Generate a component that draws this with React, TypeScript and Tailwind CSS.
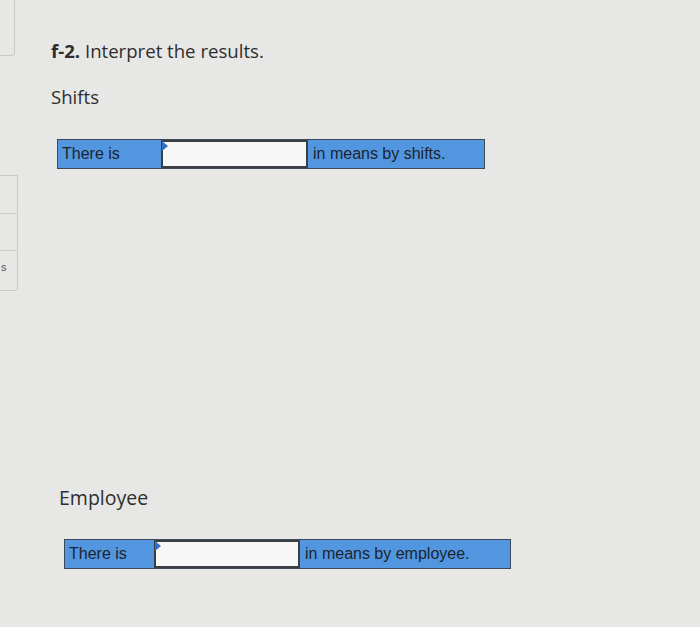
const Blank = ({ width }: { width: string }) => (
  <div className={`relative ${width} h-full bg-[#f7f7f7] border-2 border-[#3b3f45]`}>
    <span className="absolute -left-[1px] -top-[1px] w-0 h-0 border-t-[5px] border-b-[5px] border-l-[6px] border-t-transparent border-b-transparent border-l-[#2f6fc4]" />
  </div>
)

const Row = ({ left, mid, right, tail }: { left: string; mid: string; right: string; tail: string }) => (
  <div className="flex h-[30px] border border-[#3e4a58] bg-[#5196df] text-[#1c2430] text-[16px] leading-none">
    <div className={`${left} flex items-center pl-[4px]`}>There is</div>
    <Blank width={mid} />
    <div className={`${right} flex items-center pl-[5px]`}>{tail}</div>
  </div>
)

const App = () => {
  return (
    <div className="w-[700px] h-[627px] bg-[#e7e7e6] relative overflow-hidden" style={{ fontFamily: "'Liberation Sans', Arial, sans-serif" }}>

      {/* side panel remnants */}
      <div className="absolute left-0 top-0 w-[15px] h-[56px] border-r border-b border-[#c9c9c8] rounded-br-[4px]" />
      <div className="absolute left-0 top-[175px] w-[18px] h-[116px] border border-l-0 border-[#c9c9c8] rounded-br-[4px] flex flex-col">
        <div className="h-[38px] border-b border-[#cfcfce]" />
        <div className="h-[37px] border-b border-[#cfcfce]" />
        <div className="flex-1 text-[11px] text-[#555] pt-[8px] pl-[1px]">s</div>
      </div>

      <div className="pl-[51px] pt-[40px] text-[#2e2e2e]">
        <p className="text-[18.6px] leading-[22px]" style={{ fontFamily: "'Open Sans', 'Liberation Sans', sans-serif" }}>
          <span className="font-bold">f-2.</span> Interpret the results.
        </p>
        <p className="mt-[24px] text-[18.6px] leading-[22px]" style={{ fontFamily: "'Open Sans', 'Liberation Sans', sans-serif" }}>Shifts</p>

        <div className="mt-[31px] ml-[6px] w-[428px]">
          <Row left="w-[103px]" mid="w-[147px]" right="flex-1" tail="in means by shifts." />
        </div>

        <p className="mt-[317px] ml-[8px] text-[19.5px] leading-[24px]" style={{ fontFamily: "'Open Sans', 'Liberation Sans', sans-serif" }}>Employee</p>

        <div className="mt-[29px] ml-[13px] w-[447px]">
          <Row left="w-[89px]" mid="w-[146px]" right="flex-1" tail="in means by employee." />
        </div>
      </div>
    </div>
  )
}

export default App
